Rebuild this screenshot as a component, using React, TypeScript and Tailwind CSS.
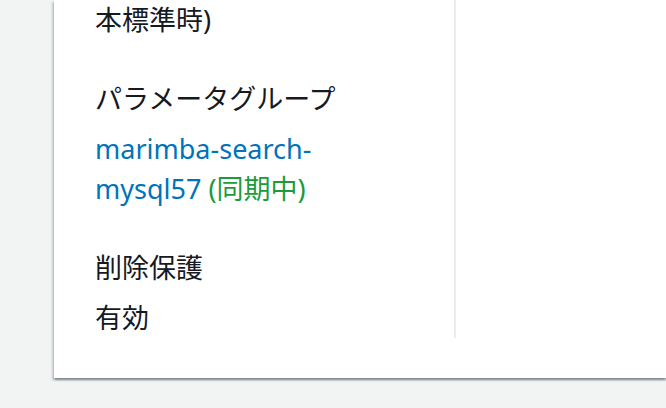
import React from "react";

const font = { fontFamily: '"Noto Sans", "Noto Sans CJK JP", sans-serif' };

export default function App() {
  return (
    <div
      className="w-[666px] h-[408px] overflow-hidden bg-[#f2f3f3] pl-[54px]"
      style={font}
    >
      {/* Details panel */}
      <div className="flex h-[378px] bg-white shadow-[0_2px_2px_0_rgba(0,28,36,0.3),2px_2px_2px_0_rgba(0,28,36,0.15),-2px_2px_2px_0_rgba(0,28,36,0.15)]">
        <div className="w-[402px] h-[338px] pl-[41px] border-r-2 border-[#eaeded] text-[27px] leading-[40px] text-[#16191f]">
          <div>本標準時)</div>

          <div className="mt-[39px]">
            <div>パラメータグループ</div>
            <div className="mt-[10px]">
              <a href="#" className="text-[#0073bb]">
                marimba-search-
                <br />
                mysql57
              </a>{" "}
              <span className="text-[#1d9a3a]">(同期中)</span>
            </div>
          </div>

          <div className="mt-[39px]">
            <div>削除保護</div>
            <div className="mt-[10px]">有効</div>
          </div>
        </div>
        <div className="flex-1" />
      </div>
    </div>
  );
}
